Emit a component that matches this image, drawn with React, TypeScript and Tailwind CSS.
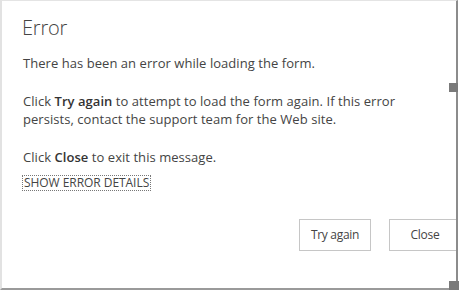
import React from "react";

const FONT = { fontFamily: '"Open Sans", "Segoe UI", "Liberation Sans", sans-serif' };

function Handle({ className }: { className: string }) {
  return <div className={`absolute bg-[#7a7a7a] ${className}`} />;
}

export default function App() {
  return (
    <div className="relative h-[290px] w-[459px] bg-white" style={FONT}>
      <div className="h-[290px] w-[458px] overflow-hidden border-t border-l-2 border-r-2 border-b-2 border-t-[#e4e4e4] border-l-[#e2e2e2] border-r-[#8c8c8c] border-b-[#9a9a9a] border-r-dotted border-b-dotted">
        <div className="w-[480px] pl-[20px] pt-[15px] text-[#444]">
          <h1 className="text-[20px] font-light leading-[24px] tracking-[-0.2px] text-[#444]">Error</h1>
          <div className="mt-[14px] text-[13px] leading-[18px] tracking-[0.05px]">
            <p className="pl-[1px]">There has been an error while loading the form.</p>
            <p className="mt-[20px] pl-[1px]">
              Click <b className="font-semibold text-[#333]">Try again</b> to attempt to load the form again. If this error
              <br />
              persists, contact the support team for the Web site.
            </p>
            <p className="mt-[20px] pl-[1px]">
              Click <b className="font-semibold text-[#333]">Close</b> to exit this message.
            </p>
          </div>
          <div className="mt-[9px] flex">
            <span className="border border-dotted border-[#777] px-[1px] text-[12px] uppercase leading-[14px] tracking-[-0.05px] text-[#444]">
              Show error details
            </span>
          </div>
          <div className="mt-[28px] flex gap-[18px] pl-[277px]">
            <button className="h-[32px] w-[72px] border border-[#c6c6c6] bg-white text-[12px] tracking-[-0.3px] text-[#444]">
              Try again
            </button>
            <button className="h-[32px] w-[72px] border border-[#c6c6c6] bg-white text-[12px] tracking-[-0.3px] text-[#444]">
              Close
            </button>
          </div>
        </div>
      </div>
      <Handle className="left-[449px] top-[83px] h-[9px] w-[9px]" />
      <Handle className="left-[449px] top-[281px] h-[9px] w-[10px]" />
    </div>
  );
}
